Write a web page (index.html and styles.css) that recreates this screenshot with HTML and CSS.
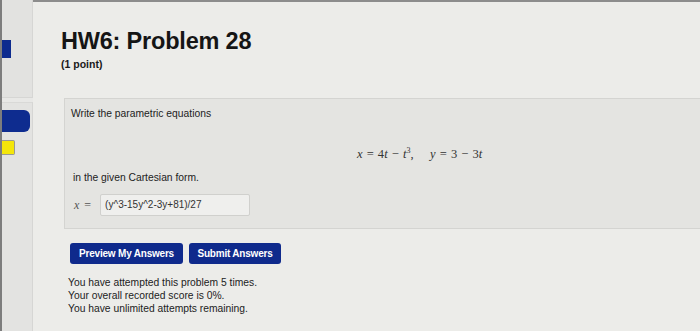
FILE: index.html
```html
<!DOCTYPE html>
<html>
<head>
<meta charset="utf-8">
<link rel="stylesheet" href="styles.css">
</head>
<body>
<div class="page">
  <aside class="side">
    <div class="side-top">
      <div class="side-bar"></div>
    </div>
    <div class="side-bottom">
      <div class="side-btn"></div>
      <div class="side-yellow"></div>
    </div>
  </aside>
  <main class="main">
    <h1 class="title">HW6: Problem 28</h1>
    <div class="points">(1 point)</div>
    <section class="problem">
      <p class="intro">Write the parametric equations</p>
      <div class="eq"><i>x</i> = 4<i>t</i> − <i>t</i><sup>3</sup>, &nbsp;&nbsp;&nbsp;<i>y</i> = 3 − 3<i>t</i></div>
      <p class="given">in the given Cartesian form.</p>
      <div class="answer-row">
        <span class="lhs"><i>x</i> =</span>
        <div class="input">(y^3-15y^2-3y+81)/27</div>
      </div>
    </section>
    <div class="buttons">
      <button class="btn btn-preview">Preview My Answers</button>
      <button class="btn btn-submit">Submit Answers</button>
    </div>
    <div class="status">
      <div>You have attempted this problem 5 times.</div>
      <div>Your overall recorded score is 0%.</div>
      <div>You have unlimited attempts remaining.</div>
    </div>
  </main>
</div>
</body>
</html>
```
FILE: styles.css
```css
html, body {
  margin: 0;
  padding: 0;
  width: 700px;
  height: 331px;
  overflow: hidden;
  background: #ebebe9;
  font-family: "Liberation Sans", Arial, sans-serif;
  color: #1e1e1e;
}
.page {
  display: flex;
  height: 331px;
  border-left: 2px solid #7d7d7d;
  box-sizing: border-box;
}
.side {
  width: 31px;
  flex: none;
  display: flex;
  flex-direction: column;
  gap: 4px;
  background: #e8e8e6;
}
.side-top {
  height: 98px;
  background: #e2e2e0;
  border-right: 1px solid #d6d6d4;
  border-bottom: 1px solid #d6d6d4;
  box-sizing: border-box;
  padding-top: 40px;
}
.side-bar {
  width: 9px;
  height: 18px;
  background: #0d2b8e;
}
.side-bottom {
  flex: 1;
  background: #e3e3e1;
  border-right: 1px solid #d6d6d4;
  border-top: 1px solid #d9d9d7;
  box-sizing: border-box;
  padding-top: 7px;
  display: flex;
  flex-direction: column;
  gap: 8px;
}
.side-btn {
  width: 28px;
  height: 22px;
  background: #0e2c8f;
  border-radius: 0 6px 6px 0;
}
.side-yellow {
  width: 12px;
  height: 13px;
  background: #f4e60a;
  border: 1px solid #9a9a90;
  border-radius: 0 2px 2px 0;
  border-left: none;
}
.main {
  flex: 1;
  border-top: 2px solid #8c8c8c;
  padding-left: 28px;
  background: #ecece9;
}
.title {
  margin: 26px 0 0 0;
  font-size: 23.5px;
  font-weight: bold;
  line-height: 27px;
  color: #151515;
  letter-spacing: -0.2px;
}
.points {
  margin-top: 3px;
  font-size: 10.5px;
  font-weight: bold;
  line-height: 12px;
  color: #1a1a1a;
}
.problem {
  margin: 28px 0 0 3px;
  height: 131px;
  box-sizing: border-box;
  background: #e4e4e1;
  border: 1px solid #d4d4d1;
  border-right: none;
  padding: 8px 0 0 6px;
  font-size: 10.3px;
}
.intro {
  margin: 0;
  line-height: 14px;
  color: #222;
}
.eq {
  margin: 26px 0 0 286px;
  font-family: "Liberation Serif", "Times New Roman", serif;
  font-size: 12.5px;
  line-height: 14px;
  color: #333;
  word-spacing: 1px;
}
.eq sup {
  font-size: 8px;
  line-height: 0;
}
.given {
  margin: 10px 0 0 2px;
  line-height: 14px;
  color: #222;
}
.answer-row {
  margin-top: 9px;
  display: flex;
  align-items: center;
  gap: 9px;
  padding-left: 3px;
}
.lhs {
  font-family: "Liberation Serif", "Times New Roman", serif;
  font-size: 12px;
  color: #555;
  word-spacing: 2px;
}
.input {
  width: 150px;
  height: 22px;
  box-sizing: border-box;
  background: #efefed;
  border: 1px solid #d0d0cd;
  border-radius: 2px;
  padding: 0 4px;
  line-height: 20px;
  font-size: 10px;
  color: #333;
}
.buttons {
  margin: 14px 0 0 9px;
  display: flex;
  gap: 6px;
}
.btn {
  height: 21px;
  padding: 0 6px;
  border: none;
  border-radius: 3px;
  background: #0f2a8c;
  color: #fff;
  font-family: "Liberation Sans", Arial, sans-serif;
  font-weight: bold;
  font-size: 10px;
  letter-spacing: -0.2px;
}
.btn-preview { width: 113px; }
.btn-submit { width: 92px; }
.status {
  margin: 12px 0 0 7px;
  font-size: 10.3px;
  line-height: 13px;
  color: #222;
}
```
